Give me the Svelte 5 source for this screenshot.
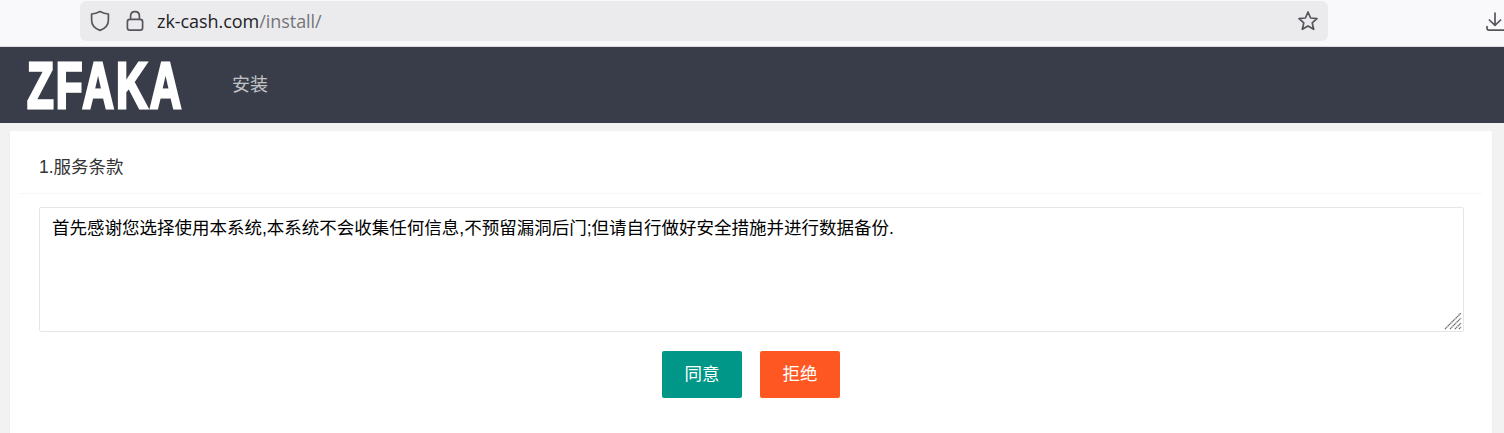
<script>
	let terms = '首先感谢您选择使用本系统,本系统不会收集任何信息,不预留漏洞后门;但请自行做好安全措施并进行数据备份.';
</script>

<div class="browser-bar">
	<div class="url-box">
		<svg class="shield" width="20" height="22" viewBox="0 0 20 22" fill="none" stroke="#55555c" stroke-width="1.7">
			<path d="M10 1.6 C12.5 3 15.5 3.9 18.4 4 V10 C18.4 15 15 18.6 10 20.4 C5 18.6 1.6 15 1.6 10 V4 C4.5 3.9 7.5 3 10 1.6 Z" stroke-linejoin="round" />
		</svg>
		<svg class="lock" width="18" height="22" viewBox="0 0 18 22" fill="none" stroke="#55555c" stroke-width="1.7">
			<rect x="1.4" y="9.4" width="15.2" height="10.8" rx="2.4" />
			<path d="M4.6 9.4 V6 C4.6 3.4 6.4 1.6 9 1.6 C11.6 1.6 13.4 3.4 13.4 6 V9.4" />
		</svg>
		<span class="url"><span class="host">zk-cash.com</span><span class="path">/install/</span></span>
		<svg class="star" width="22" height="22" viewBox="0 0 22 22" fill="none" stroke="#55555c" stroke-width="1.7" stroke-linejoin="round">
			<path d="M11 2 L13.6 8 L20 8.6 L15.2 12.9 L16.7 19.3 L11 15.9 L5.3 19.3 L6.8 12.9 L2 8.6 L8.4 8 Z" />
		</svg>
	</div>
	<svg class="download" width="18" height="20" viewBox="0 0 18 20" fill="none" stroke="#55555c" stroke-width="1.7" stroke-linecap="round" stroke-linejoin="round">
		<path d="M9 1 V13 M3.4 8 L9 13.4 L14.6 8" />
		<path d="M1 14.5 V16 C1 17.4 1.8 18.2 3 18.2 H18" />
	</svg>
</div>

<nav class="navbar">
	<div class="logo-wrap"><span class="logo">ZFAKA</span></div>
	<a class="nav-item" href="#install">安装</a>
</nav>

<div class="content">
	<section class="card">
		<div class="card-header">1.服务条款</div>
		<div class="card-body">
			<div class="terms-wrap">
				<textarea class="terms" readonly value={terms}></textarea>
				<svg class="grip" width="18" height="18" viewBox="0 0 18 18" stroke="#6b6b6b" stroke-width="1.3" stroke-dasharray="1.4 0.5">
					<path d="M1 17 L17 1 M6 17 L17 6 M11 17 L17 11 M15 17 L17 15" />
				</svg>
			</div>
			<div class="actions">
				<button class="btn agree">同意</button>
				<button class="btn refuse">拒绝</button>
			</div>
		</div>
	</section>
</div>

<style>
	:global(body) {
		margin: 0;
		background: #f2f2f2;
		overflow: hidden;
		font-family: "Liberation Sans", "Noto Sans CJK SC", sans-serif;
	}

	.browser-bar {
		display: flex;
		align-items: center;
		height: 46px;
		background: #f9f9fb;
		border-bottom: 1px solid #dcdcde;
		box-sizing: content-box;
		padding-left: 80px;
	}

	.url-box {
		display: flex;
		align-items: center;
		width: 1248px;
		height: 40px;
		margin-top: -4px;
		background: #ebebee;
		border-radius: 6px;
	}

	.shield {
		margin-left: 10px;
	}

	.lock {
		margin-left: 16px;
	}

	.url {
		margin-left: 13px;
		font-family: "Open Sans", sans-serif;
		font-size: 18px;
		letter-spacing: -0.05px;
	}

	.host {
		color: #222226;
	}

	.path {
		color: #74747a;
	}

	.star {
		margin-left: auto;
		margin-right: 9px;
	}

	.download {
		margin-left: 158px;
		margin-top: -2px;
		flex-shrink: 0;
	}

	.navbar {
		display: flex;
		align-items: center;
		height: 76px;
		background: #393d49;
	}

	.logo-wrap {
		width: 232px;
		padding-left: 27px;
		box-sizing: border-box;
		flex-shrink: 0;
	}

	.logo {
		display: inline-block;
		margin-top: 1px;
		font-family: "Liberation Sans", sans-serif;
		font-weight: 700;
		font-size: 65px;
		line-height: 76px;
		letter-spacing: 3px;
		color: #fff;
		-webkit-text-stroke: 3px #fff;
		transform: scaleX(0.675);
		transform-origin: left center;
	}

	.nav-item {
		margin-top: -4px;
		color: rgba(255, 255, 255, 0.7);
		font-size: 18px;
		text-decoration: none;
	}

	.content {
		padding: 8px 12px 0 10px;
	}

	.card {
		background: #fff;
		border-radius: 2px;
		box-shadow: 0 1px 2px rgba(0, 0, 0, 0.05);
		height: 320px;
	}

	.card-header {
		height: 62px;
		line-height: 72px;
		margin: 0 10px;
		padding-left: 19px;
		border-bottom: 1px solid #f6f6f6;
		color: #333;
		font-size: 17.5px;
	}

	.card-body {
		padding: 13px 28px 0 29px;
	}

	.terms-wrap {
		position: relative;
	}

	.terms {
		display: block;
		width: 100%;
		height: 125px;
		box-sizing: border-box;
		padding: 9px 12px;
		border: 1px solid #e6e6e6;
		border-radius: 2px;
		outline: none;
		background: #fff;
		color: #000;
		font-family: "Liberation Sans", "Noto Sans CJK SC", sans-serif;
		font-size: 17.5px;
		line-height: 22px;
		resize: none;
	}

	.grip {
		position: absolute;
		right: 2px;
		bottom: 2px;
	}

	.actions {
		display: flex;
		justify-content: center;
		gap: 18px;
		margin-top: 19px;
		padding-right: 2px;
	}

	.btn {
		width: 80px;
		height: 47px;
		padding: 0 0 5px 1px;
		border: none;
		border-radius: 2px;
		color: #fff;
		font-family: inherit;
		font-size: 17.5px;
	}

	.agree {
		background: #009688;
	}

	.refuse {
		background: #ff5722;
	}
</style>
